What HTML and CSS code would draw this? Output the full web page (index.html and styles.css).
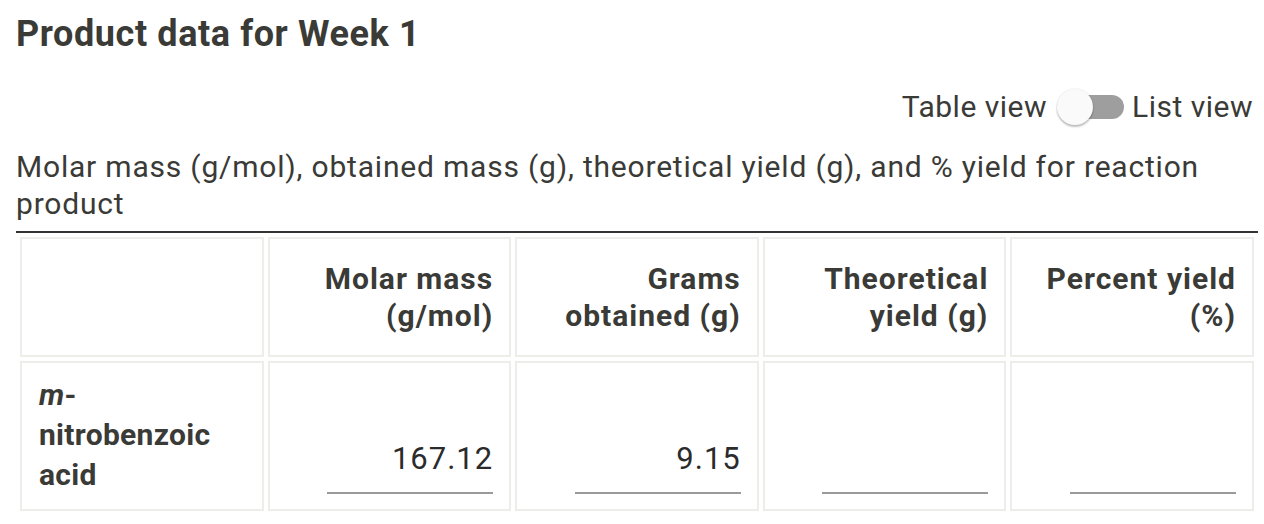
FILE: index.html
```html
<!DOCTYPE html>
<html lang="en">
<head>
<meta charset="utf-8">
<title>Product data for Week 1</title>
<link rel="stylesheet" href="styles.css">
</head>
<body>
<main class="page">
  <h1 class="title">Product data for Week 1</h1>
  <div class="view-toggle">
    <span class="toggle-label">Table view</span>
    <span class="switch" role="switch" aria-checked="false">
      <span class="switch-track"></span>
      <span class="switch-thumb"></span>
    </span>
    <span class="toggle-label">List view</span>
  </div>
  <p class="caption">Molar mass (g/mol), obtained mass (g), theoretical yield (g), and % yield for reaction product</p>
  <table class="data-table">
    <thead>
      <tr>
        <th class="corner"></th>
        <th>Molar mass (g/mol)</th>
        <th>Grams obtained (g)</th>
        <th>Theoretical yield (g)</th>
        <th>Percent yield (%)</th>
      </tr>
    </thead>
    <tbody>
      <tr>
        <th class="row-head"><i class="prefix">m</i>-nitrobenzoic acid</th>
        <td class="num"><input class="num-input" type="text" value="167.12" aria-label="Molar mass"></td>
        <td class="num"><input class="num-input" type="text" value="9.15" aria-label="Grams obtained"></td>
        <td class="num"><input class="num-input" type="text" value="" aria-label="Theoretical yield"></td>
        <td class="num"><input class="num-input" type="text" value="" aria-label="Percent yield"></td>
      </tr>
    </tbody>
  </table>
</main>
</body>
</html>
```

FILE: styles.css
```css
html, body {
  margin: 0;
  padding: 0;
  background: #ffffff;
}

body {
  font-family: Roboto, "Liberation Sans", Arial, sans-serif;
  color: #3a3a37;
}

.page {
  padding: 0 6px 0 16px;
}

.title {
  margin: 13px 0 0 0;
  font-size: 36px;
  line-height: 43px;
  font-weight: 700;
  letter-spacing: 0.6px;
  color: #3a3a36;
}

.view-toggle {
  display: flex;
  justify-content: flex-end;
  align-items: center;
  height: 40px;
  margin-top: 31px;
  padding-right: 5px;
}

.toggle-label {
  font-size: 30px;
  line-height: 40px;
  letter-spacing: 0.5px;
  color: #3a3a37;
}

.switch {
  position: relative;
  display: inline-block;
  width: 67px;
  height: 36px;
  margin: 0 8px 0 10px;
}

.switch-track {
  position: absolute;
  left: 5px;
  top: 6px;
  width: 62px;
  height: 24px;
  border-radius: 12px;
  background: #9e9e9e;
}

.switch-thumb {
  position: absolute;
  left: 0;
  top: 0;
  width: 36px;
  height: 36px;
  border-radius: 50%;
  background: #fafafa;
  box-shadow: 0 2px 2px rgba(0, 0, 0, 0.24), 0 0 2px rgba(0, 0, 0, 0.14);
}

.caption {
  margin: 21px 0 0 0;
  font-size: 30px;
  line-height: 37px;
  letter-spacing: 0.8px;
  color: #3a3a37;
}

.data-table {
  width: 100%;
  margin-top: 9px;
  table-layout: fixed;
  border-collapse: separate;
  border-spacing: 4px;
  border-top: 2px solid #333331;
}

.data-table th,
.data-table td {
  border: 2px solid #ededea;
  font-size: 30px;
}

.data-table thead th {
  padding: 21px 16px;
  text-align: right;
  font-weight: 700;
  line-height: 37px;
  letter-spacing: 1px;
  vertical-align: middle;
  color: #3a3a37;
}

.data-table .row-head {
  padding: 12px 16px 14px 17px;
  text-align: left;
  font-weight: 700;
  line-height: 40px;
  letter-spacing: 0.3px;
  vertical-align: middle;
  color: #3a3a37;
}

.data-table td.num {
  padding: 12px 16px 15px 16px;
  vertical-align: bottom;
}

.num-input {
  display: block;
  margin-left: auto;
  width: 166px;
  height: 37px;
  padding: 0 0 15px 0;
  border: 0;
  border-bottom: 2px solid #9a9a9a;
  border-radius: 0;
  background: transparent;
  font-family: Roboto, "Liberation Sans", Arial, sans-serif;
  font-size: 31px;
  letter-spacing: 1px;
  text-align: right;
  color: #2b2b2b;
  outline: none;
}
```
